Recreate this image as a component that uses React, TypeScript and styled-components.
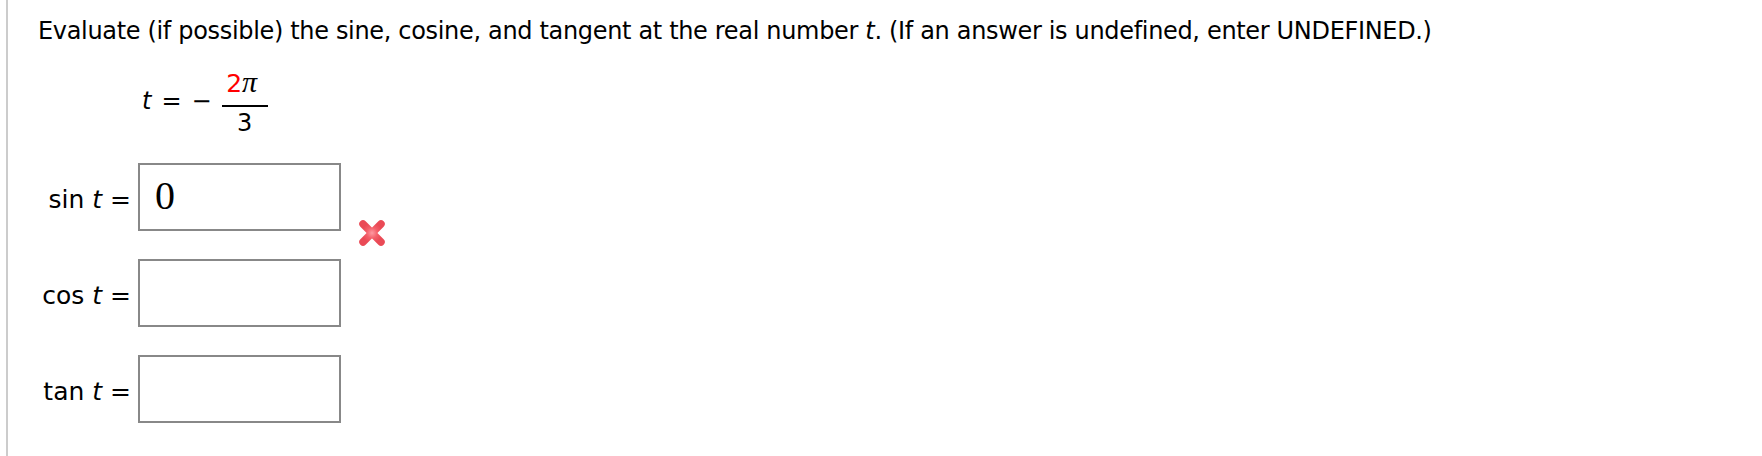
import styled, {createGlobalStyle} from "styled-components"

const GlobalStyle = createGlobalStyle`
  html, body {
    margin: 0;
    padding: 0;
    background: #fff;
  }
`

type Answer = {
  fn: string
  value?: string
  wrong?: boolean
}

const answers: Answer[] = [
  {fn: "sin", value: "0", wrong: true},
  {fn: "cos"},
  {fn: "tan"},
]

function WrongMark() {
  return (
    <Mark viewBox="0 0 28 28" width="28" height="28">
      <defs>
        <radialGradient id="xg" cx="50%" cy="50%" r="55%">
          <stop offset="0%" stopColor="#ff9aa2" />
          <stop offset="55%" stopColor="#f35f69" />
          <stop offset="100%" stopColor="#ea4a56" />
        </radialGradient>
      </defs>
      <g stroke="url(#xg)" strokeWidth="7.5" strokeLinecap="round">
        <line x1="5" y1="5" x2="23" y2="23" />
        <line x1="23" y1="5" x2="5" y2="23" />
      </g>
    </Mark>
  )
}

export default function App() {
  return (
    <>
      <GlobalStyle />
      <Page>
        <Prompt>
          Evaluate (if possible) the sine, cosine, and tangent at the real number <Var>t</Var>. (If an answer is
          undefined, enter UNDEFINED.)
        </Prompt>
        <Given>
          <Var>t</Var>
          <Op>=</Op>
          <Op>−</Op>
          <Frac>
            <Num>
              <Red>2</Red>
              <Pi>π</Pi>
            </Num>
            <Bar />
            <Den>3</Den>
          </Frac>
        </Given>
        <Answers>
          {answers.map((a) => (
            <Row key={a.fn}>
              <Label>
                <span>
                  {a.fn} <Var>t</Var> =
                </span>
              </Label>
              <Box>{a.value}</Box>
              {a.wrong && <WrongMark />}
            </Row>
          ))}
        </Answers>
      </Page>
    </>
  )
}

const Page = styled.div`
  margin-left: 6px;
  border-left: 2px solid #cccccc;
  min-height: 456px;
  box-sizing: border-box;
  padding: 16px 0 0 30px;
  font-family: "DejaVu Sans", Verdana, sans-serif;
  color: #000;
`

const Prompt = styled.div`
  font-size: 24px;
  line-height: 30px;
  letter-spacing: -0.33px;
  white-space: nowrap;
`

const Var = styled.span`
  font-style: italic;
`

const Given = styled.div`
  display: flex;
  align-items: center;
  margin: 24px 0 0 104px;
  font-size: 24px;
  height: 62px;
`

const Op = styled.span`
  margin-left: 10px;
`

const Frac = styled.div`
  display: flex;
  flex-direction: column;
  align-items: center;
  width: 46px;
  margin-left: 10px;
  padding-top: 2px;
`

const Num = styled.div`
  line-height: 28px;
  font-size: 25px;
  white-space: nowrap;
  padding-right: 6px;
`

const Red = styled.span`
  color: #ff0000;
`

const Pi = styled.span`
  font-family: "Liberation Serif", serif;
  font-style: italic;
  font-size: 30px;
`

const Bar = styled.div`
  align-self: stretch;
  height: 2px;
  background: #000;
  margin: 7px 0 3px;
`

const Den = styled.div`
  line-height: 26px;
`

const Answers = styled.div`
  display: flex;
  flex-direction: column;
  gap: 28px;
  margin-top: 31px;
`

const Row = styled.div`
  display: flex;
  align-items: flex-start;
  height: 68px;
`

const Label = styled.div`
  width: 93px;
  height: 68px;
  display: flex;
  align-items: center;
  justify-content: flex-end;
  font-size: 25px;
  white-space: pre;
  padding-top: 4px;
  box-sizing: border-box;
`

const Box = styled.div`
  width: 203px;
  height: 68px;
  margin-left: 7px;
  box-sizing: border-box;
  border: 2px solid #888888;
  background: #fff;
  font-family: "Liberation Serif", "Times New Roman", serif;
  font-size: 40px;
  line-height: 62px;
  padding-left: 15px;
`

const Mark = styled.svg`
  display: block;
  flex: none;
  margin: 56px 0 0 17px;
`
